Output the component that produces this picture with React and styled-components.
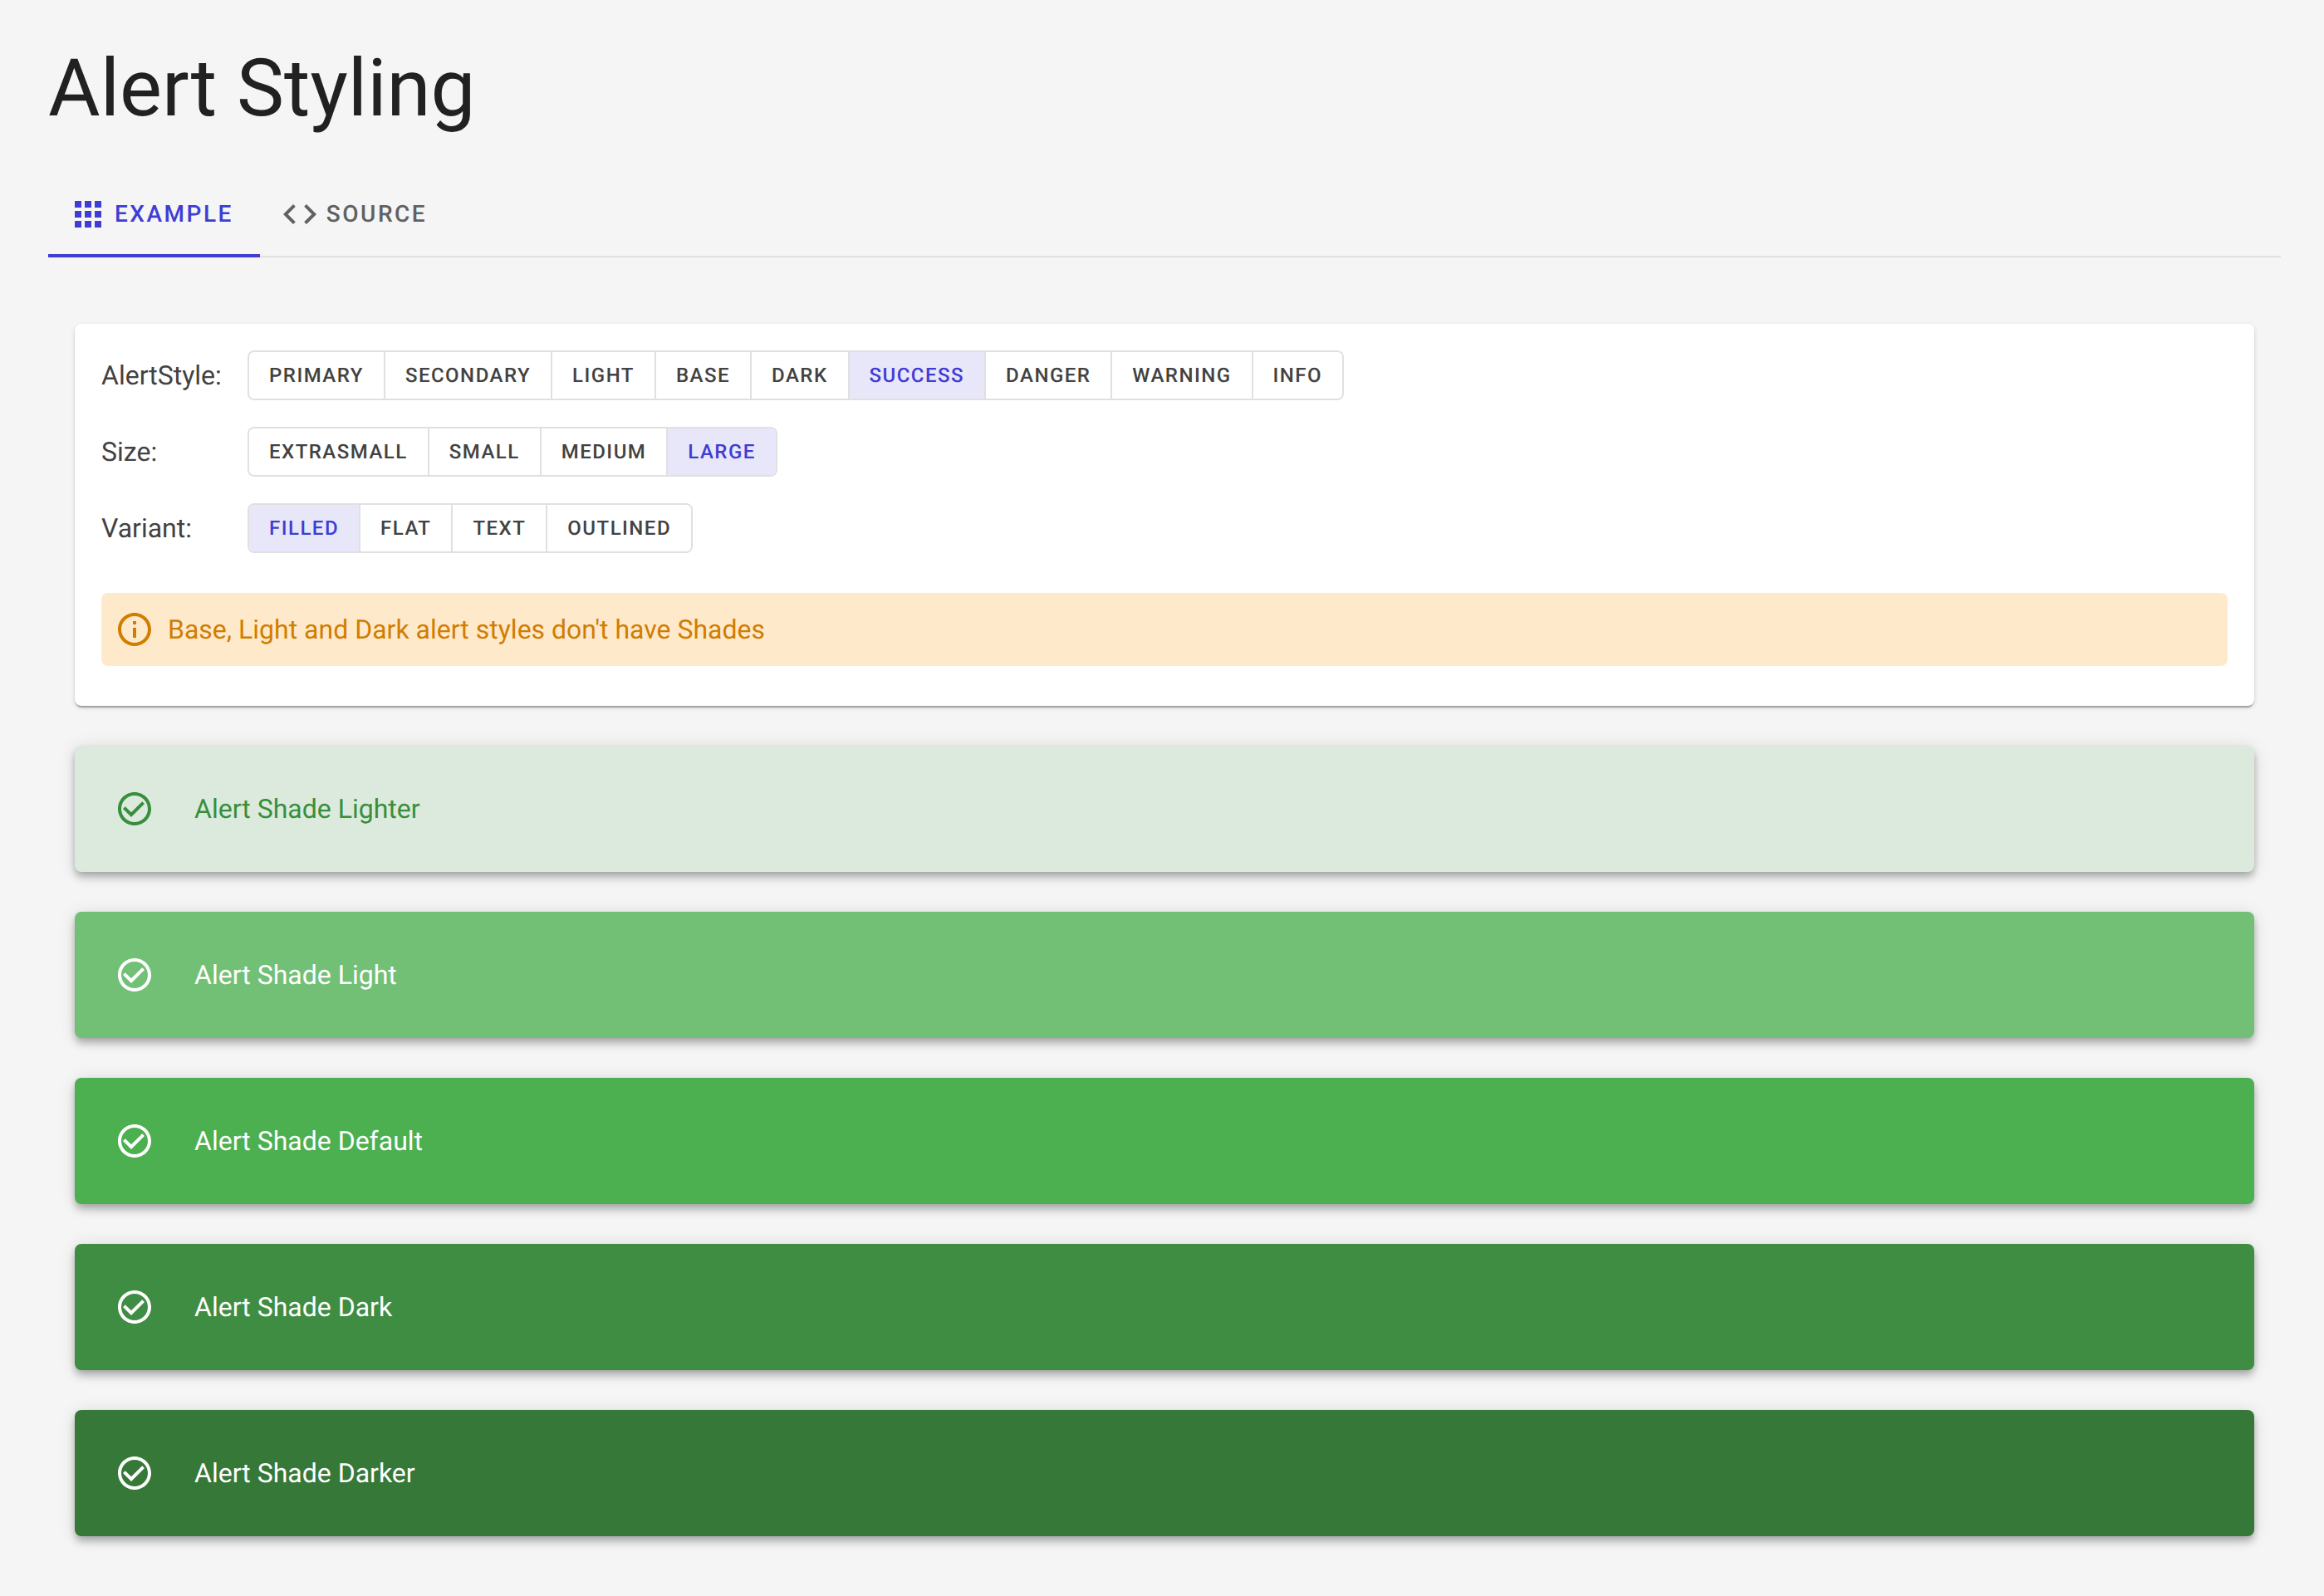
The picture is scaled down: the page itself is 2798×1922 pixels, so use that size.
import React from "react";
import styled, { createGlobalStyle } from "styled-components";

const GlobalStyle = createGlobalStyle`
  html, body {
    margin: 0;
    padding: 0;
    background: #f5f5f5;
    text-rendering: geometricPrecision;
  }
  * {
    box-sizing: border-box;
  }
`;

const Page = styled.div`
  min-height: 1922px;
  padding: 51px 52px 72px 58px;
  background: #f5f5f5;
  font-family: Roboto, sans-serif;
  color: #212121;
`;

const Title = styled.h1`
  margin: 0;
  font-size: 96px;
  line-height: 112px;
  font-weight: 400;
  color: #212121;
`;

const TabBar = styled.div`
  display: flex;
  margin-top: 47px;
  border-bottom: 2px solid #e0e0e0;
`;

const Tab = styled.div`
  display: flex;
  align-items: center;
  gap: 8px;
  height: 100px;
  padding: 0 32px 0 24px;
  margin-bottom: -2px;
  border-bottom: 4px solid ${(p) => (p.$active ? "#3f3dd4" : "transparent")};
  font-size: 28px;
  font-weight: 500;
  letter-spacing: 2.5px;
  color: ${(p) => (p.$active ? "#3f3dd4" : "#616161")};
`;

const TabLabel = styled.span`
  padding-bottom: 2px;
`;

const Content = styled.div`
  display: flex;
  flex-direction: column;
  gap: 48px;
  margin: 80px 32px 0;
`;

const Card = styled.div`
  padding: 32px 32px 48px;
  background: #fff;
  border-radius: 8px;
  box-shadow: 0 4px 2px -2px rgba(0, 0, 0, 0.2), 0 2px 2px 0 rgba(0, 0, 0, 0.14),
    0 2px 6px 0 rgba(0, 0, 0, 0.12);
`;

const OptionRows = styled.div`
  display: flex;
  flex-direction: column;
  gap: 32px;
`;

const OptionRow = styled.div`
  display: flex;
  align-items: center;
`;

const OptionLabel = styled.div`
  width: 176px;
  font-size: 32px;
  color: #424242;
`;

const ButtonGroup = styled.div`
  display: flex;
  height: 60px;
  border: 2px solid #e0e0e0;
  border-radius: 8px;
  overflow: hidden;
`;

const OptionButton = styled.div`
  display: flex;
  align-items: center;
  padding: 0 24px;
  font-size: 24px;
  font-weight: 500;
  letter-spacing: 1.48px;
  color: ${(p) => (p.$selected ? "#3f3dd4" : "#424242")};
  background: ${(p) => (p.$selected ? "#e8e7f9" : "#fff")};
  & + & {
    border-left: 2px solid #e0e0e0;
  }
`;

const Notice = styled.div`
  display: flex;
  align-items: center;
  gap: 16px;
  height: 88px;
  margin-top: 48px;
  padding: 0 16px;
  background: #ffe9cb;
  border-radius: 8px;
  font-size: 32px;
  color: #d17d00;
`;

const ShadeAlert = styled.div`
  display: flex;
  align-items: center;
  gap: 48px;
  height: 152px;
  padding: 0 48px;
  border-radius: 8px;
  font-size: 32px;
  background: ${(p) => p.$bg};
  color: ${(p) => p.$fg};
  box-shadow: 0 4px 8px -2px rgba(0, 0, 0, 0.2), 0 8px 10px 0 rgba(0, 0, 0, 0.14),
    0 2px 20px 0 rgba(0, 0, 0, 0.12);
`;

const Icon = ({ d }) => (
  <svg width="48" height="48" viewBox="0 0 24 24" fill="currentColor">
    <path d={d} />
  </svg>
);

const APPS =
  "M4 8h4V4H4v4zm6 12h4v-4h-4v4zm-6 0h4v-4H4v4zm0-6h4v-4H4v4zm6 0h4v-4h-4v4zm6-10v4h4V4h-4zm-6 4h4V4h-4v4zm6 6h4v-4h-4v4zm0 6h4v-4h-4v4z";
const CODE =
  "M9.4 16.6L4.8 12l4.6-4.6L8 6l-6 6 6 6 1.4-1.4zm5.2 0l4.6-4.6-4.6-4.6L16 6l6 6-6 6-1.4-1.4z";
const INFO =
  "M11 7h2v2h-2zm0 4h2v6h-2zm1-9C6.48 2 2 6.48 2 12s4.48 10 10 10 10-4.48 10-10S17.52 2 12 2zm0 18c-4.41 0-8-3.59-8-8s3.59-8 8-8 8 3.59 8 8-3.59 8-8 8z";
const CHECK =
  "M16.59 7.58L10 14.17l-3.59-3.58L5 12l5 5 8-8zM12 2C6.48 2 2 6.48 2 12s4.48 10 10 10 10-4.48 10-10S17.52 2 12 2zm0 18c-4.42 0-8-3.58-8-8s3.58-8 8-8 8 3.58 8 8-3.58 8-8 8z";

const options = [
  {
    label: "AlertStyle:",
    selected: "SUCCESS",
    items: ["PRIMARY", "SECONDARY", "LIGHT", "BASE", "DARK", "SUCCESS", "DANGER", "WARNING", "INFO"],
  },
  {
    label: "Size:",
    selected: "LARGE",
    items: ["EXTRASMALL", "SMALL", "MEDIUM", "LARGE"],
  },
  {
    label: "Variant:",
    selected: "FILLED",
    items: ["FILLED", "FLAT", "TEXT", "OUTLINED"],
  },
];

const shades = [
  { name: "Lighter", bg: "#dbeadd", fg: "#388e3c" },
  { name: "Light", bg: "#72c076", fg: "#fff" },
  { name: "Default", bg: "#4caf50", fg: "#fff" },
  { name: "Dark", bg: "#3f8d42", fg: "#fff" },
  { name: "Darker", bg: "#367838", fg: "#fff" },
];

export default function App() {
  return (
    <Page>
      <GlobalStyle />
      <Title>Alert Styling</Title>
      <TabBar>
        <Tab $active>
          <Icon d={APPS} />
          <TabLabel>EXAMPLE</TabLabel>
        </Tab>
        <Tab>
          <Icon d={CODE} />
          <TabLabel>SOURCE</TabLabel>
        </Tab>
      </TabBar>
      <Content>
        <Card>
          <OptionRows>
            {options.map((o) => (
              <OptionRow key={o.label}>
                <OptionLabel>{o.label}</OptionLabel>
                <ButtonGroup>
                  {o.items.map((item) => (
                    <OptionButton key={item} $selected={item === o.selected}>
                      {item}
                    </OptionButton>
                  ))}
                </ButtonGroup>
              </OptionRow>
            ))}
          </OptionRows>
          <Notice>
            <Icon d={INFO} />
            Base, Light and Dark alert styles don't have Shades
          </Notice>
        </Card>
        {shades.map((s) => (
          <ShadeAlert key={s.name} $bg={s.bg} $fg={s.fg}>
            <Icon d={CHECK} />
            Alert Shade {s.name}
          </ShadeAlert>
        ))}
      </Content>
    </Page>
  );
}
